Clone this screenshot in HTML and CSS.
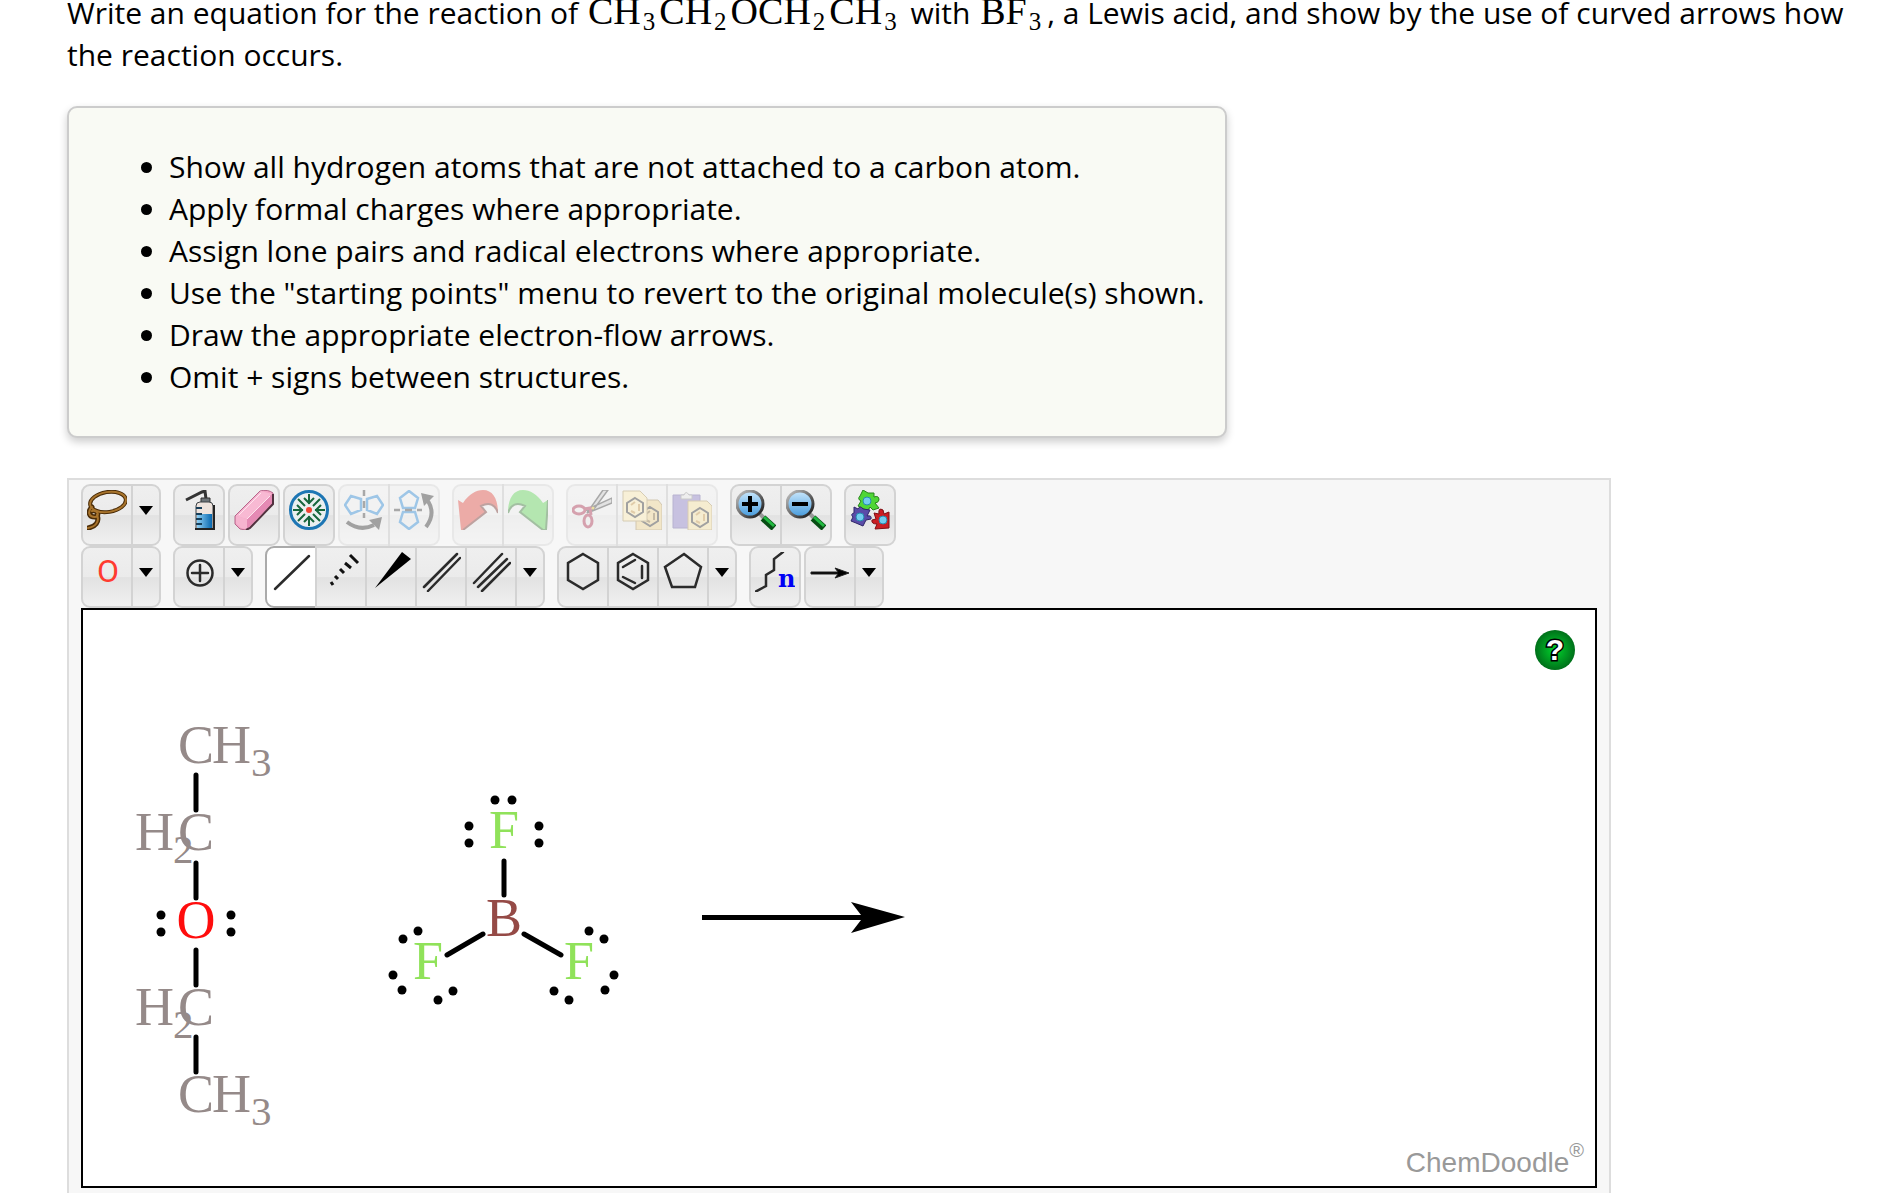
FILE: index.html
```html
<!DOCTYPE html>
<html lang="en">
<head>
  <meta charset="UTF-8" />
  <meta name="viewport" content="width=device-width, initial-scale=1.0"/>
  <title>Reaction Mechanism</title>
  <link rel="stylesheet" href="styles.css">
</head>
<body>

  <!-- Question -->
  <p class="question">Write an equation for the reaction of <span class="formula">CH<sub>3</sub>CH<sub>2</sub>OCH<sub>2</sub>CH<sub>3</sub></span> with <span class="formula">BF<sub>3</sub></span>, a Lewis acid, and show by the use of curved arrows how the reaction occurs.</p>

  <!-- Instructions -->
  <div class="hints">
    <ul>
      <li>Show all hydrogen atoms that are not attached to a carbon atom.</li>
      <li>Apply formal charges where appropriate.</li>
      <li>Assign lone pairs and radical electrons where appropriate.</li>
      <li>Use the "starting points" menu to revert to the original molecule(s) shown.</li>
      <li>Draw the appropriate electron-flow arrows.</li>
      <li>Omit + signs between structures.</li>
    </ul>
  </div>

  <!-- Sketcher -->
  <div class="sketcher">
    <div class="toolbar">
      <div class="group">
        <button class="tool" aria-label="Lasso">
          <svg viewBox="0 0 40 40">
            <g fill="none" stroke-linecap="round">
              <ellipse cx="21" cy="12" rx="18" ry="10" transform="rotate(-9 21 12)" stroke="#4a2c08" stroke-width="4"/>
              <path d="M5 17C0 22 2 27 8 27C13 26 11 20 5 21M10 25C13 32 8 37 1 38" stroke="#4a2c08" stroke-width="5"/>
              <ellipse cx="21" cy="12" rx="18" ry="10" transform="rotate(-9 21 12)" stroke="#a8742c" stroke-width="2"/>
              <path d="M5 17C0 22 2 27 8 27C13 26 11 20 5 21M10 25C13 32 8 37 1 38" stroke="#a8742c" stroke-width="2"/>
            </g>
          </svg>
        </button>
        <button class="more" aria-label="Selection menu"><span class="caret"></span></button>
      </div>

      <div class="group">
        <button class="tool" aria-label="Clear">
          <svg viewBox="0 0 40 40">
            <defs>
              <linearGradient id="liquid"><stop offset="0" stop-color="#8fd0f5"/><stop offset="1" stop-color="#0868b0"/></linearGradient>
            </defs>
            <path d="M7 10L23 2L26 1L27 9" fill="none" stroke="#343434" stroke-width="3"/>
            <path d="M22 8H31V13H22Z" fill="#6e7478" stroke="#333"/>
            <path d="M17 16Q17 12 21 12H30Q34 12 34 16V39H17Z" fill="#eee3dd" stroke="#3c4246"/>
            <path d="M18 24H33V38H18Z" fill="url(#liquid)"/>
            <path d="M17 18H23M17 24H23M17 29H23M17 34H23" stroke="#173e59" stroke-width="2"/>
            <path d="M16 39H35V15" fill="none" stroke="#222" stroke-width="2"/>
          </svg>
        </button>
      </div>
      <div class="group near">
        <button class="tool" aria-label="Erase">
          <svg viewBox="0 0 40 40">
            <path d="M1 26L26 1Q34 -1 39 3V13L16 38L12 40L6 39L1 34Z" fill="#f3a5c5" stroke="#b5678a"/>
            <path d="M2 26L27 1L38 4L13 29Z" fill="#f8b9d3"/>
            <path d="M13 29L38 4V14L13 39Z" fill="#e58ab4"/>
            <path d="M2 26L13 29V39L7 38L2 33Z" fill="#f6b4cf"/>
            <path d="M13 29L36 6M5 25L27 3" stroke="#fde4ee" stroke-width="1"/>
            <path d="M12 40L16 38L39 14V4" fill="none" stroke="#51323f" stroke-width="2"/>
          </svg>
        </button>
      </div>
      <div class="group near">
        <button class="tool" aria-label="Clean structure">
          <svg viewBox="0 0 40 40">
            <circle cx="20" cy="20" r="18.5" fill="#ebeff0" stroke="#1d76b4" stroke-width="3"/>
            <g fill="none" stroke="#17663c" stroke-width="2">
              <path id="flake" d="M20 4V14M15 8L20 13L25 8"/>
              <use href="#flake" transform="rotate(90 20 20)"/>
              <use href="#flake" transform="rotate(180 20 20)"/>
              <use href="#flake" transform="rotate(270 20 20)"/>
              <path d="M9 9L16 16M31 9L24 16M9 31L16 24M31 31L24 24"/>
            </g>
            <circle cx="20" cy="20" r="3" fill="#f04434"/>
          </svg>
        </button>
      </div>
      <div class="group near">
        <button class="tool" aria-label="Flip horizontally" disabled>
          <svg viewBox="0 0 40 40">
            <path d="M1 15L7 6L17 9V20L7 24ZM39 15L33 6L23 9V20L33 24Z" fill="none" stroke="#1b7fd0" stroke-width="2.5"/>
            <path d="M20 0V6M20 11V18M20 23V28" stroke="#333" stroke-width="2.5"/>
            <path d="M3 32Q16 42 30 35" fill="none" stroke="#222" stroke-width="4"/>
            <path d="M25 30L38 27L35 40Z" fill="#222"/>
          </svg>
        </button>
        <button class="tool" aria-label="Flip vertically" disabled>
          <svg viewBox="0 0 40 40">
            <path d="M15 1L24 8L21 18H9L6 8ZM15 39L24 32L21 22H9L6 32Z" fill="none" stroke="#1b7fd0" stroke-width="2.5"/>
            <path d="M0 20H6M11 20H18M23 20H28" stroke="#333" stroke-width="2.5"/>
            <path d="M32 37Q42 24 34 11" fill="none" stroke="#222" stroke-width="4"/>
            <path d="M27 3L40 6L30 16Z" fill="#222"/>
          </svg>
        </button>
      </div>

      <div class="group">
        <button class="tool" aria-label="Undo" disabled>
          <svg viewBox="0 0 40 40">
            <path d="M0 10L5 13C11 4 18 0 25 0C35 0 40 9 40 23C37 14 31 12 23 16L28 22L5 40H3Z" fill="#dc3c32"/>
            <path d="M40 23C37 14 31 12 23 16L28 22L5 40" fill="none" stroke="#6b2420" stroke-width="2"/>
          </svg>
        </button>
        <button class="tool" aria-label="Redo" disabled>
          <svg viewBox="0 0 40 40">
            <path d="M40 10L35 13C29 4 22 0 15 0C5 0 0 9 0 23C3 14 9 12 17 16L12 22L35 40H38Z" fill="#52cf48"/>
            <path d="M0 23C3 14 9 12 17 16L12 22L35 40H38L40 10" fill="none" stroke="#276e24" stroke-width="2"/>
          </svg>
        </button>
      </div>

      <div class="group">
        <button class="tool" aria-label="Cut" disabled>
          <svg viewBox="0 0 40 40">
            <path d="M15 23L31 0H36L22 19ZM14 20L40 8V13L18 22Z" fill="#c4c4c4" stroke="#333" stroke-width="1.5"/>
            <ellipse cx="7" cy="20" rx="6" ry="4" fill="none" stroke="#a32242" stroke-width="3"/>
            <ellipse cx="16" cy="31" rx="4" ry="6" fill="none" stroke="#a32242" stroke-width="3"/>
            <path d="M12 19L18 18L19 25" fill="none" stroke="#a32242" stroke-width="3"/>
            <circle cx="21" cy="18" r="1.5" fill="#e0b920"/>
          </svg>
        </button>
        <button class="tool" aria-label="Copy" disabled>
          <svg viewBox="0 0 40 40">
            <path d="M14 10H36L40 15V40H14Z" fill="#edcf83" stroke="#9b804b"/>
            <path id="hex" d="M28 17L36 22V31L28 36L20 31V22Z" fill="none" stroke="#222" stroke-width="2"/>
            <path d="M24 24L28 21M32 23V30M24 30L28 32" stroke="#7c602c" stroke-width="2"/>
            <path d="M1 1H18L25 8V31H1Z" fill="#fae7a9" stroke="#a68d52"/>
            <use href="#hex" x="-15" y="-9"/>
            <path d="M9 15L13 12M17 14V21M9 21L13 23" stroke="#c28e36" stroke-width="2"/>
          </svg>
        </button>
        <button class="tool" aria-label="Paste" disabled>
          <svg viewBox="0 0 40 40">
            <path d="M1 5H28V38H1Z" fill="#8173c0" stroke="#5c5098"/>
            <path d="M9 9V5H12Q14 0 17 5H20V9Z" fill="#e1e1e1" stroke="#888"/>
            <path d="M16 11H35L40 16V40H16Z" fill="#f4dc98" stroke="#a68d52"/>
            <use href="#hex" y="1"/>
            <path d="M24 25L28 22M32 24V31M24 31L28 33" stroke="#c28e36" stroke-width="2"/>
          </svg>
        </button>
      </div>

      <div class="group">
        <button class="tool" aria-label="Zoom in">
          <svg viewBox="0 0 40 40">
            <defs>
              <linearGradient id="lens" x2="0" y2="1"><stop offset="0" stop-color="#c9e7fc"/><stop offset="1" stop-color="#469bdc"/></linearGradient>
              <linearGradient id="rim" x2="1" y2="1"><stop offset="0" stop-color="#c6c6c6"/><stop offset="1" stop-color="#111"/></linearGradient>
            </defs>
            <path d="M24 24L29 29" stroke="#999" stroke-width="4"/>
            <path d="M27 28L38 38" stroke="#064d13" stroke-width="7"/>
            <path d="M28 27L38 36" stroke="#21b941" stroke-width="3"/>
            <circle cx="14" cy="14" r="13" fill="url(#lens)" stroke="url(#rim)" stroke-width="3"/>
            <path d="M6 14H22M14 6V22" stroke="#000" stroke-width="4"/>
          </svg>
        </button>
        <button class="tool" aria-label="Zoom out">
          <svg viewBox="0 0 40 40">
            <path d="M24 24L29 29" stroke="#999" stroke-width="4"/>
            <path d="M27 28L38 38" stroke="#064d13" stroke-width="7"/>
            <path d="M28 27L38 36" stroke="#21b941" stroke-width="3"/>
            <circle cx="14" cy="14" r="13" fill="url(#lens)" stroke="url(#rim)" stroke-width="3"/>
            <path d="M6 14H22" stroke="#000" stroke-width="4"/>
          </svg>
        </button>
      </div>

      <div class="group">
        <button class="tool" aria-label="Templates">
          <svg viewBox="0 0 40 40">
            <path d="M13 0L18 3L24 3V7Q29 5 29 10Q28 13 25 13L29 18L23 20L20 17Q18 22 14 19L8 16L11 11Q7 9 10 6Z" fill="#4ed636" stroke="#27831b"/>
            <path d="M4 17L8 19Q10 15 13 19L20 20L17 26Q22 25 21 29L16 30L13 36L6 33L1 31L3 27Q0 24 4 23Z" fill="#5a4ca8" stroke="#2e2668"/>
            <path d="M24 23L29 24Q28 17 33 20L34 24L39 22V38L25 39L27 34Q21 34 22 30L26 29Z" fill="#cb1e23" stroke="#7f1014"/>
            <g fill="#73cdf0" stroke="#278cae">
              <circle cx="17" cy="11" r="4"/>
              <circle cx="10" cy="27" r="4"/>
              <circle cx="33" cy="30" r="4"/>
            </g>
          </svg>
        </button>
      </div>
    </div>

    <div class="toolbar">
      <div class="group">
        <button class="tool" aria-label="Oxygen label">
          <svg viewBox="0 0 40 40"><text class="element" x="21" y="30">O</text></svg>
        </button>
        <button class="more" aria-label="Element menu"><span class="caret"></span></button>
      </div>

      <div class="group">
        <button class="tool" aria-label="Increase charge">
          <svg viewBox="0 0 40 40" class="line">
            <circle cx="21" cy="21" r="12.5"/>
            <path d="M13 21H29M21 13V29"/>
          </svg>
        </button>
        <button class="more" aria-label="Attribute menu"><span class="caret"></span></button>
      </div>

      <div class="group">
        <button class="tool active" aria-label="Single bond">
          <svg viewBox="0 0 40 40" class="line"><path d="M4 37L38 4"/></svg>
        </button>
        <button class="tool" aria-label="Recessed bond">
          <svg viewBox="0 0 40 40"><path d="M10 30L12 33M14 24L17 27M19 17L23 21M24 11L30 16M29 3L37 11" stroke="#111" stroke-width="3"/></svg>
        </button>
        <button class="tool" aria-label="Protruding bond">
          <svg viewBox="0 0 40 40"><path d="M4 36L31 0L40 7Z"/></svg>
        </button>
        <button class="tool" aria-label="Double bond">
          <svg viewBox="0 0 40 40" class="line"><path d="M3 35L36 2M7 39L39 6"/></svg>
        </button>
        <button class="tool" aria-label="Triple bond">
          <svg viewBox="0 0 40 40" class="line"><path d="M3 31L31 2M7 35L36 7M11 39L39 11"/></svg>
        </button>
        <button class="more" aria-label="Bond menu"><span class="caret"></span></button>
      </div>

      <div class="group">
        <button class="tool" aria-label="Cyclohexane ring">
          <svg viewBox="0 0 40 40" class="line"><path d="M20 2L35 11V28L20 37L5 28V11Z"/></svg>
        </button>
        <button class="tool" aria-label="Benzene ring">
          <svg viewBox="0 0 40 40" class="line"><path d="M20 2L35 11V28L20 37L5 28V11ZM10 15L22 8M29 14V26M10 25L22 31"/></svg>
        </button>
        <button class="tool" aria-label="Cyclopentane ring">
          <svg viewBox="0 0 40 40" class="line"><path d="M21 2L38 15L32 35H9L2 15Z"/></svg>
        </button>
        <button class="more" aria-label="Ring menu"><span class="caret"></span></button>
      </div>

      <div class="group">
        <button class="tool" aria-label="Chain">
          <svg viewBox="0 0 40 40" class="line">
            <path d="M0 40L11 34V23L19 18V7L28 0"/>
            <text class="repeat" x="23" y="35">n</text>
          </svg>
        </button>
      </div>
      <div class="group near">
        <button class="tool" aria-label="Reaction arrow">
          <svg viewBox="0 0 40 40"><path d="M1 20H28L25 16L39 21L25 26L28 22H1Z" stroke="#222"/></svg>
        </button>
        <button class="more" aria-label="Arrow menu"><span class="caret"></span></button>
      </div>
    </div>

    <div class="canvas">
      <svg class="drawing" role="img" aria-label="Diethyl ether and boron trifluoride with a reaction arrow">
        <!-- diethyl ether -->
        <g class="bond">
          <path d="M113 165V200M113 253V288M113 340V375M113 427V462"/>
        </g>
        <g class="carbon">
          <text x="95" y="153">C</text><text x="129" y="153">H</text><text class="count" x="168" y="166">3</text>
          <text x="52" y="240">H</text><text class="count" x="90" y="253">2</text><text x="95" y="240">C</text>
          <text x="52" y="415">H</text><text class="count" x="90" y="428">2</text><text x="95" y="415">C</text>
          <text x="95" y="502">C</text><text x="129" y="502">H</text><text class="count" x="168" y="515">3</text>
        </g>
        <text class="oxygen" x="113" y="328">O</text>
        <g>
          <circle cx="78" cy="305" r="4.5"/><circle cx="78" cy="322" r="4.5"/>
          <circle cx="148" cy="305" r="4.5"/><circle cx="148" cy="322" r="4.5"/>
        </g>

        <!-- boron trifluoride -->
        <g class="bond">
          <path d="M421 251V285M364 345L400 324M441 324L478 345"/>
        </g>
        <text class="boron" x="421" y="326">B</text>
        <g class="fluorine">
          <text x="421" y="238">F</text>
          <text x="345" y="369">F</text>
          <text x="496" y="369">F</text>
        </g>
        <g>
          <circle cx="412" cy="190" r="4.5"/><circle cx="429" cy="190" r="4.5"/>
          <circle cx="386" cy="216" r="4.5"/><circle cx="386" cy="233" r="4.5"/>
          <circle cx="456" cy="216" r="4.5"/><circle cx="456" cy="233" r="4.5"/>
          <circle cx="335" cy="321" r="4.5"/><circle cx="320" cy="329" r="4.5"/>
          <circle cx="310" cy="365" r="4.5"/><circle cx="319" cy="380" r="4.5"/>
          <circle cx="355" cy="390" r="4.5"/><circle cx="370" cy="381" r="4.5"/>
          <circle cx="506" cy="321" r="4.5"/><circle cx="521" cy="329" r="4.5"/>
          <circle cx="531" cy="365" r="4.5"/><circle cx="522" cy="380" r="4.5"/>
          <circle cx="486" cy="390" r="4.5"/><circle cx="471" cy="381" r="4.5"/>
        </g>

        <!-- reaction arrow -->
        <path d="M619 305H778L768 292L822 307L768 323L778 310H619Z"/>
      </svg>
      <button class="help" aria-label="Help">
        <svg viewBox="0 0 40 40">
          <defs>
            <radialGradient id="globe"><stop offset="0" stop-color="#00d42c"/><stop offset="1" stop-color="#00701a"/></radialGradient>
          </defs>
          <circle cx="20" cy="20" r="20" fill="url(#globe)"/>
          <text x="20" y="30">?</text>
        </svg>
      </button>
      <span class="brand">ChemDoodle<sup>®</sup></span>
    </div>
  </div>

</body>
</html>
```
FILE: styles.css
```css
* {
  margin: 0;
  padding: 0;
  box-sizing: border-box;
}

body {
  font-family: 'Open Sans', sans-serif;
  font-size: 30px;
  line-height: 42px;
  color: #000;
  background-color: #fff;
  padding: 0 40px 0 67px;
}

.question {
  margin-top: -8px;
}

.formula {
  font-family: 'Liberation Serif', serif;
  font-size: 38px;
  line-height: 0;
  white-space: nowrap;
  margin: 0 2px;
}

.formula sub {
  font-size: 25px;
  line-height: 0;
  vertical-align: -6px;
  margin: 0 4px 0 2px;
}

/* Instructions */
.hints {
  max-width: 1160px;
  margin-top: 30px;
  padding: 38px 20px;
  background-color: #f9faf4;
  border: 2px solid #ccc;
  border-radius: 10px;
  box-shadow: 0 4px 8px rgba(0,0,0,0.2);
}

.hints ul {
  padding-left: 80px;
}

/* Sketcher */
.sketcher {
  max-width: 1544px;
  margin-top: 40px;
  padding: 4px 12px 5px;
  background-color: #f7f7f7;
  border: 2px solid #ddd;
  border-bottom: none;
}

.toolbar {
  display: flex;
  gap: 12px;
}

.group {
  display: flex;
}

.group.near {
  margin-left: -9px;
}

.tool, .more {
  height: 62px;
  padding: 4px;
  border: 2px solid #d3d3d3;
  background: linear-gradient(#efefef, #ebebeb 50%, #e2e2e2 51%, #f0f0f0);
  display: flex;
  cursor: pointer;
}

.tool {
  width: 52px;
}

.more {
  width: 30px;
  justify-content: center;
  padding-top: 20px;
}

.group button + button {
  margin-left: -2px;
}

.group button:first-child {
  border-top-left-radius: 9px;
  border-bottom-left-radius: 9px;
}

.group button:last-child {
  border-top-right-radius: 9px;
  border-bottom-right-radius: 9px;
}

.tool:disabled {
  opacity: 0.4;
  cursor: default;
}

.tool.active {
  background: #fff;
  border-color: #aaa;
}

.tool svg {
  width: 40px;
  height: 40px;
  flex: none;
}

.caret {
  border: 7px solid transparent;
  border-top: 9px solid #000;
  border-bottom: none;
  height: 0;
}

.line {
  fill: none;
  stroke: #2b2b2b;
  stroke-width: 2.5;
  stroke-linecap: round;
}

.element {
  font-family: Roboto, sans-serif;
  font-size: 32px;
  fill: #ff3b30;
  text-anchor: middle;
}

.repeat {
  font-family: 'DejaVu Serif', serif;
  font-size: 24px;
  font-weight: bold;
  fill: #0000f5;
  stroke: none;
}

/* Drawing area */
.canvas {
  position: relative;
  height: 580px;
  background-color: #fff;
  border: 2px solid #000;
}

.drawing {
  display: block;
  width: 100%;
  height: 100%;
  font-family: 'Liberation Serif', serif;
  font-size: 54px;
}

.bond {
  stroke: #000;
  stroke-width: 5;
  stroke-linecap: round;
}

.carbon {
  fill: #958a89;
}

.count {
  font-size: 41px;
}

.oxygen {
  fill: #ff0d0d;
  text-anchor: middle;
}

.boron {
  fill: #954a46;
  text-anchor: middle;
}

.fluorine {
  fill: #90e25a;
  text-anchor: middle;
}

.help {
  position: absolute;
  top: 20px;
  right: 20px;
  width: 40px;
  height: 40px;
  border: none;
  border-radius: 50%;
  background: none;
  cursor: pointer;
}

.help svg {
  display: block;
}

.help text {
  font-family: 'Liberation Sans', sans-serif;
  font-size: 30px;
  font-weight: bold;
  fill: #fff;
  stroke: #000;
  stroke-width: 3;
  paint-order: stroke;
  text-anchor: middle;
}

.brand {
  position: absolute;
  right: 11px;
  bottom: 2px;
  font-family: 'Liberation Sans', sans-serif;
  font-size: 28px;
  color: #999;
}

.brand sup {
  font-size: 20px;
  line-height: 0;
  vertical-align: 15px;
}
```
